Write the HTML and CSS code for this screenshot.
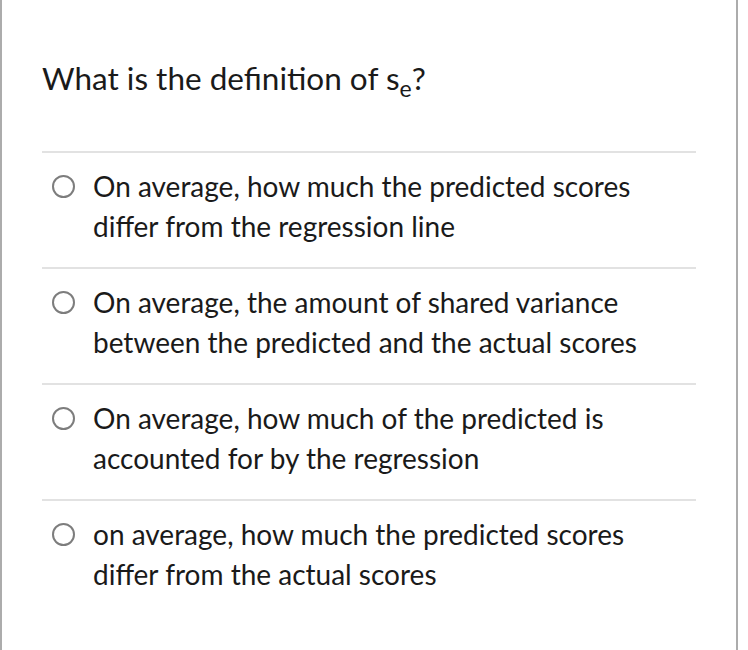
FILE: index.html
```html
<!DOCTYPE html>
<html>
<head>
<meta charset="utf-8">
<link rel="stylesheet" href="styles.css">
</head>
<body>
<div class="card">
  <h1 class="question">What is the definition of s<sub class="sub">e</sub>?</h1>
  <ul class="answers">
    <li class="answer"><span class="radio"></span><span class="label">On average, how much the predicted scores differ from the regression line</span></li>
    <li class="answer"><span class="radio"></span><span class="label">On average, the amount of shared variance between the predicted and the actual scores</span></li>
    <li class="answer"><span class="radio"></span><span class="label">On average, how much of the predicted is accounted for by the regression</span></li>
    <li class="answer"><span class="radio"></span><span class="label">on average, how much the predicted scores differ from the actual scores</span></li>
  </ul>
</div>
</body>
</html>
```
FILE: styles.css
```css
html, body {
  margin: 0;
  padding: 0;
  background: #fff;
}
body {
  font-family: Lato, "Noto Sans", sans-serif;
  color: #1a1a1a;
}
.card {
  width: 738px;
  height: 650px;
  border-left: 2px solid #acacac;
  border-right: 2px solid #acacac;
  padding: 0 40px;
  box-sizing: border-box;
}
.question {
  margin: 0;
  padding: 58px 0 0 0;
  font-size: 31.5px;
  font-weight: 400;
  line-height: 40px;
  height: 151px;
  box-sizing: border-box;
}
.sub {
  font-size: 23px;
  vertical-align: -7px;
  line-height: 0;
}
.answers {
  list-style: none;
  margin: 0;
  padding: 0;
}
.answer {
  display: flex;
  align-items: flex-start;
  border-top: 2px solid #e2e2e2;
  padding: 13px 0 0 10px;
  height: 116px;
  box-sizing: border-box;
}
.radio {
  display: block;
  flex: none;
  width: 23px;
  height: 23px;
  box-sizing: border-box;
  border: 2px solid #7d7d7d;
  border-radius: 50%;
  margin-top: 9px;
  margin-right: 18px;
}
.label {
  font-size: 28px;
  line-height: 40px;
  flex: 1;
  padding-right: 16px;
}
```
